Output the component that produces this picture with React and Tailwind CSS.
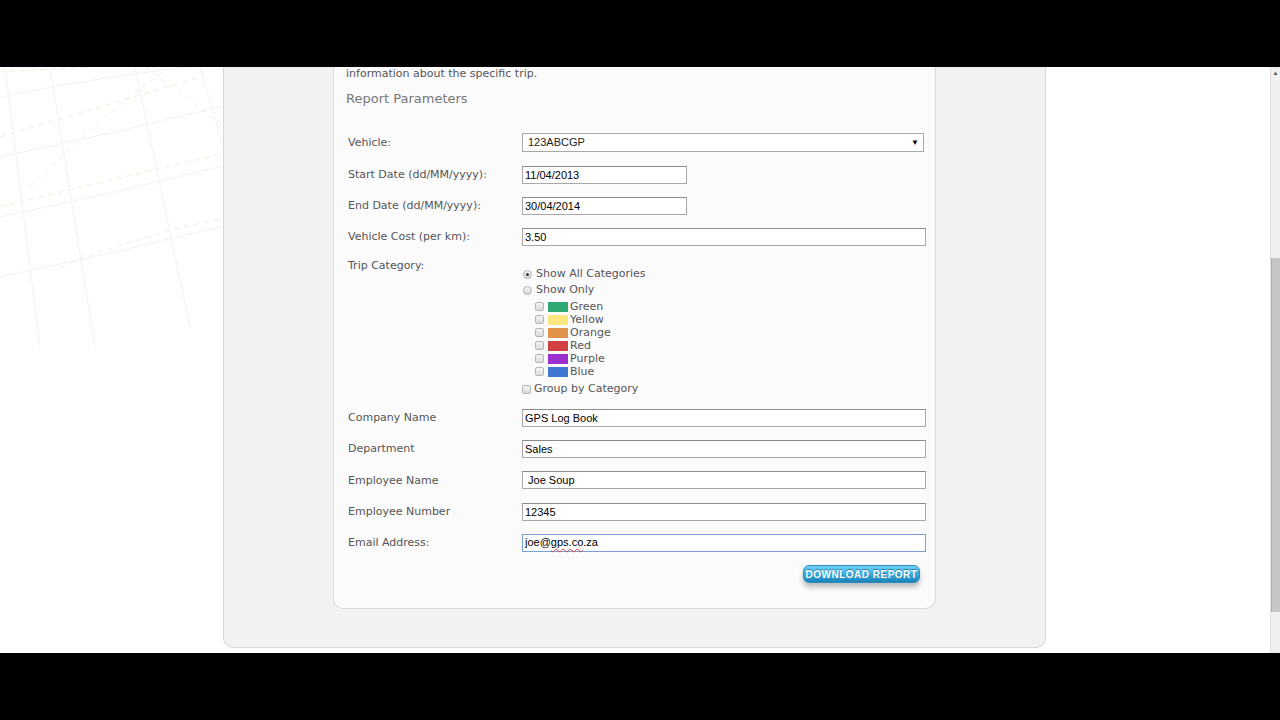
import React from "react";

const labelFont = { fontFamily: '"DejaVu Sans", Verdana, sans-serif' };

function Row({ label, h = "h-[31px]", children }) {
  return (
    <div className={`flex items-center ${h}`}>
      <div className="w-[176px] pl-[2px] pt-[2px] text-[11px] text-[#555]" style={labelFont}>{label}</div>
      <div className="flex-1 flex items-center">{children}</div>
    </div>
  );
}

function TextInput({ value, w = "w-[404px]" }) {
  return (
    <input
      readOnly
      value={value}
      className={`${w} h-[18px] bg-white px-[2px] text-[11px] text-black outline-none border border-[#a8a8a8] border-t-[#8c8c8c]`}
      style={{ fontFamily: '"Liberation Sans", Arial, sans-serif' }}
    />
  );
}

function Checkbox() {
  return <span className="inline-block w-[9px] h-[9px] rounded-[2px] border border-[#b5b5b5] bg-gradient-to-b from-[#f4f4f4] to-[#dcdcdc]" />;
}

function Radio({ checked }) {
  return (
    <span className="relative inline-flex items-center justify-center w-[9px] h-[9px] rounded-full border border-[#b0b0b0] bg-gradient-to-b from-[#f6f6f6] to-[#d8d8d8]">
      {checked && <span className="w-[3px] h-[3px] rounded-full bg-[#333]" />}
    </span>
  );
}

const cats = [
  ["Green", "bg-[#2fa973]"],
  ["Yellow", "bg-[#fbe67f]"],
  ["Orange", "bg-[#e2934b]"],
  ["Red", "bg-[#d04242]"],
  ["Purple", "bg-[#9b2fcf]"],
  ["Blue", "bg-[#4176d3]"],
];

function MapLines() {
  return (
    <svg className="absolute left-0 top-0" width="240" height="280" viewBox="0 0 240 280">
      <g stroke="#f1f1f1" strokeWidth="1" fill="none">
        <path d="M5 0 L40 280" />
        <path d="M50 0 L95 280" />
        <path d="M135 0 L190 260" />
        <path d="M200 0 L235 120" />
        <path d="M0 30 Q120 5 240 -5" />
        <path d="M0 90 Q120 65 240 35" />
        <path d="M0 150 Q120 125 240 95" />
        <path d="M0 210 Q120 185 240 155" />
      </g>
      <g stroke="#f2eedd" strokeWidth="1" fill="none" strokeDasharray="6 4">
        <path d="M0 5 L90 0" />
        <path d="M0 70 Q100 40 200 10" />
        <path d="M30 120 Q100 50 170 0" />
        <path d="M0 140 Q100 115 230 85" />
        <path d="M60 200 Q150 165 230 150" />
        <path d="M145 0 L225 60" />
      </g>
    </svg>
  );
}

export default function App() {
  return (
    <div className="w-[1280px] h-[720px] flex flex-col bg-black overflow-hidden">
      <div className="h-[67px] bg-black" />
      <div className="h-[586px] flex bg-white">
        <div className="relative flex-1 overflow-hidden bg-white">
          <MapLines />
          <div className="relative ml-[223px] w-[823px] h-[581px] bg-[#f2f2f2] border-l border-r border-b border-[#d8d8d8] rounded-b-[10px] flex flex-col">
            <div className="ml-[109px] w-[603px] h-[542px] bg-[#fbfbfb] border-l border-r border-b border-[#dadada] rounded-b-[10px] pl-[12px] pr-[9px] flex flex-col">
              <div className="h-[13px] leading-[13px] text-[11px] text-[#555]" style={labelFont}>
                information about the specific trip.
              </div>
              <div className="mt-[9px] h-[20px] leading-[20px] text-[13px] text-[#777]" style={labelFont}>
                Report Parameters
              </div>
              <div className="mt-[17px]">
                <div className="flex items-center h-[33px]">
                  <div className="w-[176px] pl-[2px] pt-[2px] text-[11px] text-[#555]" style={labelFont}>Vehicle:</div>
                  <div className="w-[402px] h-[19px] border border-[#a8a8a8] bg-white flex items-center justify-between pl-[5px] pr-[4px] text-[11px] text-[#222]" style={{ fontFamily: '"Liberation Sans", Arial, sans-serif' }}>
                    <span>123ABCGP</span>
                    <span className="text-[8px] text-black">▼</span>
                  </div>
                </div>
                <Row label="Start Date (dd/MM/yyyy):"><TextInput value="11/04/2013" w="w-[165px]" /></Row>
                <Row label="End Date (dd/MM/yyyy):"><TextInput value="30/04/2014" w="w-[165px]" /></Row>
                <Row label="Vehicle Cost (per km):"><TextInput value="3.50" /></Row>

                <div className="flex h-[150px]">
                  <div className="w-[176px] pl-[2px] pt-[7px] text-[11px] leading-[14px] text-[#555]" style={labelFont}>Trip Category:</div>
                  <div className="pt-[14px] text-[11px] text-[#555]" style={labelFont}>
                    <div className="flex items-center h-[16px] pl-[1px] gap-[4px]"><Radio checked /><span>Show All Categories</span></div>
                    <div className="flex items-center h-[16px] pl-[1px] gap-[4px]"><Radio /><span>Show Only</span></div>
                    <div className="mt-[2px] pl-[13px]">
                      {cats.map(([name, cls]) => (
                        <div key={name} className="flex items-center h-[13px] leading-[13px]">
                          <Checkbox />
                          <span className={`ml-[4px] w-[20px] h-[10px] ${cls}`} />
                          <span className="ml-[2px]">{name}</span>
                        </div>
                      ))}
                    </div>
                    <div className="mt-[3px] flex items-center h-[16px] gap-[3px]"><Checkbox /><span>Group by Category</span></div>
                  </div>
                </div>

                <Row label="Company Name"><TextInput value="GPS Log Book" /></Row>
                <Row label="Department"><TextInput value="Sales" /></Row>
                <Row label="Employee Name" h="h-[32px]"><TextInput value=" Joe Soup" /></Row>
                <Row label="Employee Number"><TextInput value="12345" /></Row>
                <Row label="Email Address:" h="h-[31px]">
                  <div className="w-[404px] h-[18px] bg-white px-[2px] text-[11px] text-black border border-[#7b9fd3] flex items-center" style={{ fontFamily: '"Liberation Sans", Arial, sans-serif' }}>
                    <span>joe@<span className="underline decoration-wavy decoration-[#e04040] decoration-1 underline-offset-2">gps.co</span>.za</span>
                  </div>
                </Row>
                <div className="mt-[7px] flex justify-end pr-[6px]">
                  <div
                    className="h-[18px] w-[117px] rounded-[6px] bg-gradient-to-b from-[#70d0f2] via-[#38abdd] to-[#1b83b9] border border-[#2a8fc0] flex items-center justify-center whitespace-nowrap text-white font-bold text-[10px] tracking-[0.5px] shadow-[0_4px_5px_rgba(0,0,0,0.25)]"
                    style={{ fontFamily: '"Liberation Sans", Arial, sans-serif', textShadow: "0 -1px 0 rgba(0,60,100,0.5)" }}
                  >
                    DOWNLOAD REPORT
                  </div>
                </div>
              </div>
            </div>
          </div>
        </div>
        <div className="w-[10px] h-full bg-[#f0f0f0] border-l border-[#e2e2e2] flex flex-col">
          <div className="h-[12px] flex items-center justify-center text-[6px] text-[#555]">▲</div>
          <div className="mt-[179px] h-[354px] bg-[#c6c6c6] border-l border-[#b0b0b0]" />
        </div>
      </div>
      <div className="h-[67px] bg-black" />
    </div>
  );
}
